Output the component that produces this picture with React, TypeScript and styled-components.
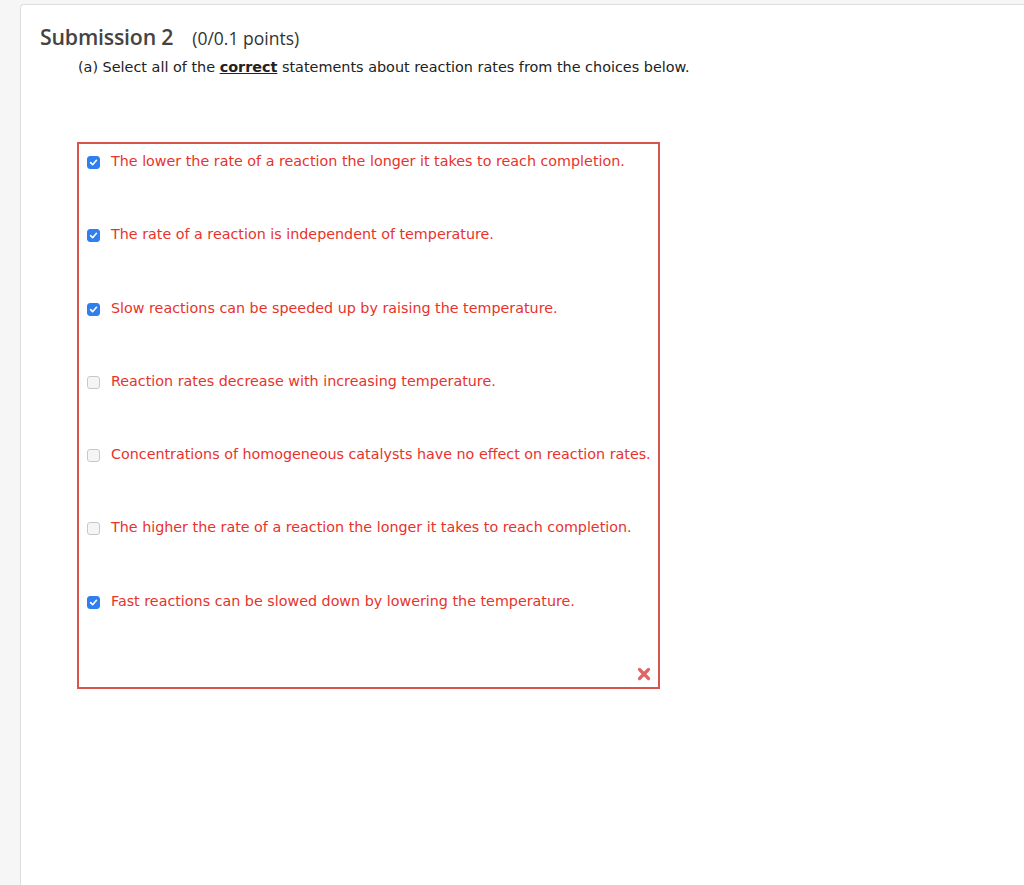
import React from "react";
import styled, { createGlobalStyle } from "styled-components";

const GlobalStyle = createGlobalStyle`
  html, body {
    margin: 0;
    padding: 0;
    background: #f6f6f6;
  }
  body {
    font-family: "DejaVu Sans", Verdana, sans-serif;
  }
`;

const Page = styled.div`
  padding: 4px 0 0 20px;
  height: 885px;
  box-sizing: border-box;
  overflow: hidden;
`;

const Card = styled.div`
  background: #fff;
  border: 1px solid #dedede;
  border-right: none;
  border-bottom: none;
  border-top-left-radius: 4px;
  height: 100%;
  box-sizing: border-box;
  padding: 17px 0 0 19px;
`;

const Heading = styled.div`
  display: flex;
  align-items: baseline;
  gap: 19px;
  color: #444;
  font-family: "Open Sans", sans-serif;
`;

const Title = styled.h2`
  margin: 0;
  font-size: 21.3px;
  font-weight: 600;
  letter-spacing: -0.2px;
`;

const Points = styled.span`
  font-size: 17.5px;
  color: #333;
`;

const Prompt = styled.p`
  margin: 8px 0 0 38px;
  font-family: "DejaVu Sans", Verdana, sans-serif;
  font-size: 14.4px;
  color: #222;
`;

const Strong = styled.strong`
  text-decoration: underline;
`;

const ChoiceBox = styled.div`
  position: relative;
  margin: 67px 0 0 37px;
  width: 583px;
  height: 547px;
  box-sizing: border-box;
  border: 2px solid #d9534f;
  padding: 7px 0 0 8px;
`;

const Choice = styled.label`
  display: flex;
  gap: 11px;
  height: 73.3px;
  align-items: flex-start;
  font-family: "DejaVu Sans", Verdana, sans-serif;
  font-size: 14.3px;
  color: #e8322c;
`;

const Box = styled.span<{ $checked: boolean }>`
  flex: none;
  width: 13px;
  height: 13px;
  margin-top: 5px;
  border-radius: 3px;
  box-sizing: border-box;
  display: flex;
  align-items: center;
  justify-content: center;
  background: ${(p) => (p.$checked ? "#2f7ff0" : "#f5f5f5")};
  border: 1px solid ${(p) => (p.$checked ? "#2f7ff0" : "#c8c8c8")};
`;

const Text = styled.span`
  line-height: 20px;
`;

const Wrong = styled.span`
  position: absolute;
  right: 7px;
  bottom: 7px;
  width: 14px;
  height: 14px;
`;

const choices: [string, boolean][] = [
  ["The lower the rate of a reaction the longer it takes to reach completion.", true],
  ["The rate of a reaction is independent of temperature.", true],
  ["Slow reactions can be speeded up by raising the temperature.", true],
  ["Reaction rates decrease with increasing temperature.", false],
  ["Concentrations of homogeneous catalysts have no effect on reaction rates.", false],
  ["The higher the rate of a reaction the longer it takes to reach completion.", false],
  ["Fast reactions can be slowed down by lowering the temperature.", true],
];

export default function App() {
  return (
    <>
      <GlobalStyle />
      <Page>
        <Card>
          <Heading>
            <Title>Submission 2</Title>
            <Points>(0/0.1 points)</Points>
          </Heading>
          <Prompt>
            (a) Select all of the <Strong>correct</Strong> statements about reaction rates from the choices below.
          </Prompt>
          <ChoiceBox>
            {choices.map(([text, checked]) => (
              <Choice key={text}>
                <Box $checked={checked}>
                  {checked && (
                    <svg width="9" height="9" viewBox="0 0 10 10">
                      <path d="M1.8 5.2 L4 7.4 L8.3 2.5" fill="none" stroke="#fff" strokeWidth="1.8" strokeLinecap="round" strokeLinejoin="round" />
                    </svg>
                  )}
                </Box>
                <Text>{text}</Text>
              </Choice>
            ))}
            <Wrong>
              <svg width="14" height="14" viewBox="0 0 14 14">
                <path d="M2.5 2.5 L11.5 11.5 M11.5 2.5 L2.5 11.5" stroke="#e06666" strokeWidth="3.2" strokeLinecap="round" />
              </svg>
            </Wrong>
          </ChoiceBox>
        </Card>
      </Page>
    </>
  );
}
